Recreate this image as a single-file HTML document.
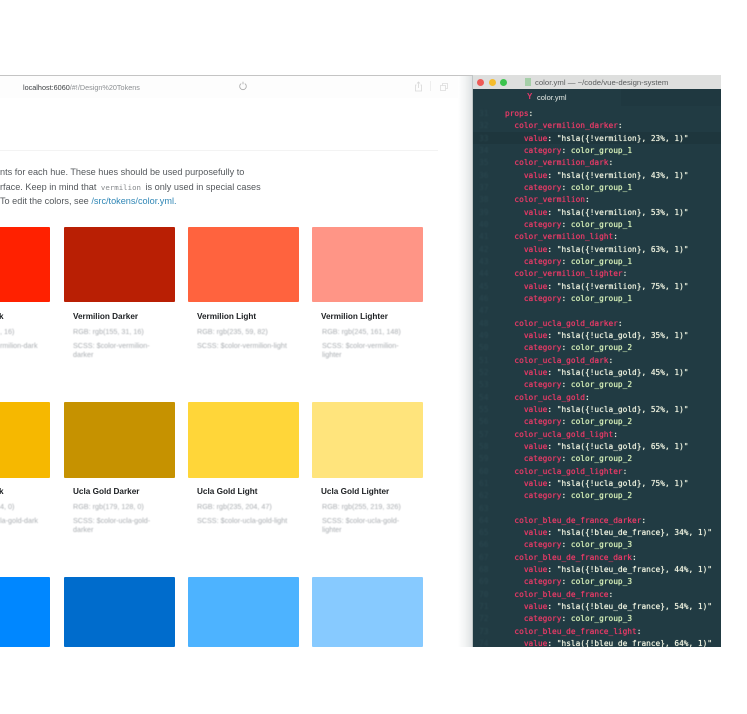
<!DOCTYPE html>
<html lang="en">
<head>
<meta charset="utf-8">
<title>Design Tokens</title>
<style>
html,body{margin:0;padding:0;background:#fff}
body{position:relative;width:747px;height:714px;overflow:hidden;font-family:"Liberation Sans",sans-serif}
.a{position:absolute}
.t{position:absolute;white-space:nowrap;filter:blur(.35px)}
.sw{position:absolute;width:111px;border-radius:1px;filter:blur(.3px)}
.n{position:absolute;white-space:nowrap;font-weight:700;font-size:8.2px;color:#1c1f22;filter:blur(.3px)}
.m{position:absolute;white-space:nowrap;font-size:7.2px;color:#a9adb1;filter:blur(.4px)}
#win{left:0;top:75px;width:473px;height:572px;background:#fff;border-top:1px solid #c4c4c4;box-sizing:border-box}
#ed{left:473px;top:75px;width:247.5px;height:572px;background:#213b43;overflow:hidden}
#bar{left:0;top:0;width:247.5px;height:14px;background:#dedfde}
pre{position:absolute;margin:0;left:32px;top:33px;font:7.82px/12.33px "DejaVu Sans Mono","Liberation Mono",monospace;color:#eef3e3;filter:blur(.3px);text-shadow:0 0 .6px currentColor}
pre.ln{left:6px;color:#2b4850;text-shadow:none;filter:blur(.8px)}
.k{color:#ee3a68}.s{color:#f1f5e2}.v{color:#dcf6bc}
</style>
</head>
<body>
<div id="win" class="a"></div>
<div class="a" style="left:0;top:76px;width:458px;height:22px;background:#fdfdfd"></div>
<div class="t" style="left:23px;top:83px;font-size:7.25px;color:#8c8f92"><b style="font-weight:400;color:#3c3f42">localhost:6060</b>/#!/Design%20Tokens</div>
<svg class="a" style="left:238px;top:81px" width="10" height="11" viewBox="0 0 10 11"><path d="M3.2 2.6A3.3 3.3 0 1 0 6.8 2.6M5 .8v2.4" fill="none" stroke="#a8a8a8" stroke-width=".8"/></svg>
<svg class="a" style="left:414px;top:81px" width="9" height="11" viewBox="0 0 9 11"><path d="M2.5 4H1.5v6h6V4h-1M4.5 7V1M3 2.5L4.5 1 6 2.5" fill="none" stroke="#d8d8d8" stroke-width=".8"/></svg>
<div class="a" style="left:430px;top:81px;width:1px;height:10px;background:#eee"></div>
<svg class="a" style="left:439px;top:82px" width="10" height="10" viewBox="0 0 10 10"><path d="M1.5 3.5h5v5h-5zM3.5 3.5v-2h5v5h-2" fill="none" stroke="#dcdcdc" stroke-width=".8"/></svg>
<div class="a" style="left:458px;top:76px;width:15px;height:571px;background:linear-gradient(90deg,#fff,#f1f3f3 50%,#dde0e1)"></div>
<div class="a" style="left:472px;top:75px;width:1px;height:572px;background:#bfc5c6"></div>
<div class="a" style="left:0;top:150px;width:438px;height:1px;background:#f3f3f3"></div>

<div class="t" style="left:0;top:167px;font-size:9.15px;color:#54585c">nts for each hue. These hues should be used purposefully to</div>
<div class="t" style="left:0;top:181.5px;font-size:9.15px;color:#54585c">rface. Keep in mind that <span style="font:7.4px 'DejaVu Sans Mono',monospace;color:#85888b;padding:0 2px">vermilion</span> is only used in special cases</div>
<div class="t" style="left:0;top:196px;font-size:9.15px;color:#54585c">To edit the colors, see <span style="color:#2f86b5">/src/tokens/color.yml.</span></div>

<!-- row 1 -->
<div class="sw" style="left:-61px;top:227px;height:75px;background:#ff2100"></div>
<div class="sw" style="left:64px;top:227px;height:75px;background:#b91f04"></div>
<div class="sw" style="left:188px;top:227px;height:75px;background:#ff633e"></div>
<div class="sw" style="left:312px;top:227px;height:75px;background:#ff9586"></div>
<div class="n" style="left:-1px;top:311.5px">k</div>
<div class="m" style="left:0;top:327px">, 16)</div>
<div class="m" style="left:0;top:341px">rmilion-dark</div>
<div class="n" style="left:73px;top:311.5px">Vermilion Darker</div>
<div class="m" style="left:73px;top:327px">RGB: rgb(155, 31, 16)</div>
<div class="m" style="left:73px;top:341px">SCSS: $color-vermilion-</div>
<div class="m" style="left:73px;top:350px">darker</div>
<div class="n" style="left:197px;top:311.5px">Vermilion Light</div>
<div class="m" style="left:197px;top:327px">RGB: rgb(235, 59, 82)</div>
<div class="m" style="left:197px;top:341px">SCSS: $color-vermilion-light</div>
<div class="n" style="left:321px;top:311.5px">Vermilion Lighter</div>
<div class="m" style="left:322px;top:327px">RGB: rgb(245, 161, 148)</div>
<div class="m" style="left:322px;top:341px">SCSS: $color-vermilion-</div>
<div class="m" style="left:322px;top:350px">lighter</div>

<!-- row 2 -->
<div class="sw" style="left:-61px;top:402px;height:76px;background:#f6b800"></div>
<div class="sw" style="left:64px;top:402px;height:76px;background:#c69200"></div>
<div class="sw" style="left:188px;top:402px;height:76px;background:#ffd639"></div>
<div class="sw" style="left:312px;top:402px;height:76px;background:#ffe47c"></div>
<div class="n" style="left:-1px;top:487px">k</div>
<div class="m" style="left:0;top:502px">4, 0)</div>
<div class="m" style="left:0;top:516px">la-gold-dark</div>
<div class="n" style="left:73px;top:487px">Ucla Gold Darker</div>
<div class="m" style="left:73px;top:502px">RGB: rgb(179, 128, 0)</div>
<div class="m" style="left:73px;top:516px">SCSS: $color-ucla-gold-</div>
<div class="m" style="left:73px;top:525px">darker</div>
<div class="n" style="left:197px;top:487px">Ucla Gold Light</div>
<div class="m" style="left:197px;top:502px">RGB: rgb(235, 204, 47)</div>
<div class="m" style="left:197px;top:516px">SCSS: $color-ucla-gold-light</div>
<div class="n" style="left:321px;top:487px">Ucla Gold Lighter</div>
<div class="m" style="left:322px;top:502px">RGB: rgb(255, 219, 326)</div>
<div class="m" style="left:322px;top:516px">SCSS: $color-ucla-gold-</div>
<div class="m" style="left:322px;top:525px">lighter</div>

<!-- row 3 -->
<div class="sw" style="left:-61px;top:577px;height:70px;background:#0087ff"></div>
<div class="sw" style="left:64px;top:577px;height:70px;background:#006ccc"></div>
<div class="sw" style="left:188px;top:577px;height:70px;background:#4db3ff"></div>
<div class="sw" style="left:312px;top:577px;height:70px;background:#87caff"></div>

<!-- editor -->
<div id="ed" class="a">
<div class="a" style="left:0;top:57px;width:247.5px;height:12px;background:rgba(0,0,0,.08)"></div>
<div class="a" style="left:148px;top:14px;width:99.5px;height:17px;background:rgba(0,0,0,.04)"></div>
<pre class="ln">31
32
33
34
35
36
37
38
39
40
41
42
43
44
45
46
47
48
49
50
51
52
53
54
55
56
57
58
59
60
61
62
63
64
65
66
67
68
69
70
71
72
73
74
75
76</pre>
<pre><span class="k">props</span>:
  <span class="k">color_vermilion_darker</span>:
    <span class="k">value</span>: <span class="s">"hsla({!vermilion}, 23%, 1)"</span>
    <span class="k">category</span>: <span class="v">color_group_1</span>
  <span class="k">color_vermilion_dark</span>:
    <span class="k">value</span>: <span class="s">"hsla({!vermilion}, 43%, 1)"</span>
    <span class="k">category</span>: <span class="v">color_group_1</span>
  <span class="k">color_vermilion</span>:
    <span class="k">value</span>: <span class="s">"hsla({!vermilion}, 53%, 1)"</span>
    <span class="k">category</span>: <span class="v">color_group_1</span>
  <span class="k">color_vermilion_light</span>:
    <span class="k">value</span>: <span class="s">"hsla({!vermilion}, 63%, 1)"</span>
    <span class="k">category</span>: <span class="v">color_group_1</span>
  <span class="k">color_vermilion_lighter</span>:
    <span class="k">value</span>: <span class="s">"hsla({!vermilion}, 75%, 1)"</span>
    <span class="k">category</span>: <span class="v">color_group_1</span>

  <span class="k">color_ucla_gold_darker</span>:
    <span class="k">value</span>: <span class="s">"hsla({!ucla_gold}, 35%, 1)"</span>
    <span class="k">category</span>: <span class="v">color_group_2</span>
  <span class="k">color_ucla_gold_dark</span>:
    <span class="k">value</span>: <span class="s">"hsla({!ucla_gold}, 45%, 1)"</span>
    <span class="k">category</span>: <span class="v">color_group_2</span>
  <span class="k">color_ucla_gold</span>:
    <span class="k">value</span>: <span class="s">"hsla({!ucla_gold}, 52%, 1)"</span>
    <span class="k">category</span>: <span class="v">color_group_2</span>
  <span class="k">color_ucla_gold_light</span>:
    <span class="k">value</span>: <span class="s">"hsla({!ucla_gold}, 65%, 1)"</span>
    <span class="k">category</span>: <span class="v">color_group_2</span>
  <span class="k">color_ucla_gold_lighter</span>:
    <span class="k">value</span>: <span class="s">"hsla({!ucla_gold}, 75%, 1)"</span>
    <span class="k">category</span>: <span class="v">color_group_2</span>

  <span class="k">color_bleu_de_france_darker</span>:
    <span class="k">value</span>: <span class="s">"hsla({!bleu_de_france}, 34%, 1)"</span>
    <span class="k">category</span>: <span class="v">color_group_3</span>
  <span class="k">color_bleu_de_france_dark</span>:
    <span class="k">value</span>: <span class="s">"hsla({!bleu_de_france}, 44%, 1)"</span>
    <span class="k">category</span>: <span class="v">color_group_3</span>
  <span class="k">color_bleu_de_france</span>:
    <span class="k">value</span>: <span class="s">"hsla({!bleu_de_france}, 54%, 1)"</span>
    <span class="k">category</span>: <span class="v">color_group_3</span>
  <span class="k">color_bleu_de_france_light</span>:
    <span class="k">value</span>: <span class="s">"hsla({!bleu_de_france}, 64%, 1)"</span></pre>
<div id="bar" class="a"></div>
<div class="a" style="left:3.5px;top:3.5px;width:7px;height:7px;border-radius:50%;background:#ee5a56"></div>
<div class="a" style="left:15.5px;top:3.5px;width:7px;height:7px;border-radius:50%;background:#f5bd2e"></div>
<div class="a" style="left:26.5px;top:3.5px;width:7px;height:7px;border-radius:50%;background:#3cc44e"></div>
<div class="a" style="left:52px;top:3px;width:6px;height:8px;background:#a5cfa8"></div>
<div class="t" style="left:62px;top:3px;font-size:7.75px;color:#5a5d5e">color.yml — ~/code/vue-design-system</div>
<div class="t" style="left:54px;top:17px;font-size:8px;font-weight:700;color:#e8396a">Y</div>
<div class="t" style="left:64px;top:18px;font-size:7.5px;color:#e6ebe6">color.yml</div>
</div>
</body>
</html>
